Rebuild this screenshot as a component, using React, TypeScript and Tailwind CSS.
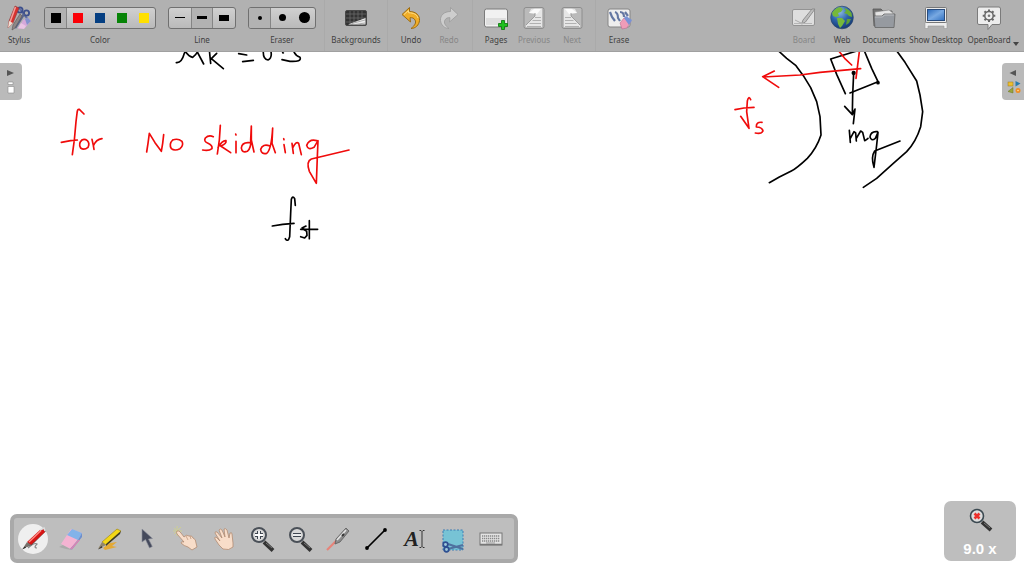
import React from "react";
import clsx from "clsx";

type IconProps = { className?: string };

/* ---------- Top toolbar icons (26 x 26) ---------- */

function StylusIcon() {
  return (
    <svg viewBox="0 0 26 26" className="size-[26px]">
      <path d="M13 3 23 16" stroke="#5f6fa5" strokeWidth="2" />
      <circle cx="14" cy="5" r="2.6" fill="none" stroke="#3c4f8c" strokeWidth="1.8" />
      <circle cx="20.500" cy="8" r="2.6" fill="none" stroke="#3c4f8c" strokeWidth="1.8" />
      <path d="M18 9 9 23" stroke="#59658c" strokeWidth="2.4" />
      <path d="M9 1 13 3 7 18 2 23 3 16Z" fill="#d8312f" stroke="#8d3a3a" strokeWidth=".6" />
      <path d="M9.500 2 4 17" stroke="#f3a09a" strokeWidth="1.500" />
      <path d="M3 16 7 18 2 23Z" fill="#f0ddd0" />
      <path d="M14 9 16 11 9 23 6 25 7 20Z" fill="#8e8787" stroke="#5d5656" strokeWidth=".6" />
      <path d="M17 15 22 13 25 16 19 23 12 24Z" fill="#d5a9da" />
      <path d="M19 14 22 13 25 16 21 20Z" fill="#8292cc" />
      <path d="M12 23 15 18 20 21 18 24Z" fill="#eac4e4" />
    </svg>
  );
}

function BackgroundsIcon() {
  return (
    <svg viewBox="0 0 26 26" className="size-[26px]">
      <rect x="2.500" y="5.500" width="21" height="15" rx="1.500" fill="#333" stroke="#4a4a4a" />
      <path d="M3 9h20M3 13h20M3 17h20M7 6v14M11 6v14M15 6v14M19 6v14" stroke="#6a6a6a" strokeWidth=".8" />
      <path d="M5 19.500 22.500 13v6.500Z" fill="#ececec" />
      <path d="M9 18.500 22 15M12 19.500 22 18" stroke="#999" strokeWidth=".8" />
    </svg>
  );
}

function UndoIcon({ className }: IconProps) {
  return (
    <svg viewBox="0 0 26 26" className={clsx("size-[26px]", className)}>
      <path
        d="M4 9.500 11.500 2.500 11.500 6.500C18 6.500 22 10.500 21.500 15.500 21 20 17.500 23.500 13 23.500 17 20.500 18.500 17.500 17 15 16 13 14 12.500 12 12.700L12.500 17Z"
        fill="currentColor"
        stroke="#9b6c15"
        strokeWidth="1"
        strokeLinejoin="round"
      />
      <path d="M6 9.500 10.500 5.500 10.700 7.800C15.500 7.800 19 9.500 20 13" fill="none" stroke="#ffe08a" strokeWidth="1" />
    </svg>
  );
}

function RedoIcon() {
  return (
    <svg viewBox="0 0 26 26" className="size-[26px]">
      <path
        d="M22 9.500 14.500 2.500 14.500 6.500C8 6.500 4 10.500 4.500 15.500 5 20 8.500 23.500 13 23.500 9 20.500 7.500 17.500 9 15 10 13 12 12.500 14 12.700L13.500 17Z"
        fill="#cdcdcd"
        stroke="#9b9b9b"
        strokeWidth=".8"
        strokeLinejoin="round"
      />
    </svg>
  );
}

function PagesIcon() {
  return (
    <svg viewBox="0 0 26 26" className="size-[26px]">
      <rect x="1.500" y="4" width="23" height="18" rx="2" fill="#f1f1f1" stroke="#7b7b7b" />
      <path d="M3 13h20v7H3z" fill="#dedede" />
      <path d="M18.500 15.500h3v3h3v3h-3v3h-3v-3h-3v-3h3z" fill="#1fc01f" stroke="#087508" strokeWidth=".8" />
    </svg>
  );
}

function PageTurnIcon({ className }: IconProps) {
  return (
    <svg viewBox="0 0 26 26" className={clsx("size-[26px]", className)}>
      <rect x="3" y="2.500" width="20" height="21" rx="2" fill="#bababa" stroke="#8e8e8e" />
      <path d="M10 4 14 3.500H21V22H5V20L14 11V8L8 8Z" fill="#e6e6e6" />
      <path d="M8 8 13 4 20 4 16 9Z" fill="#fafafa" />
      <path d="M14 12.500h6M11.500 15.500H20M8.500 18.500H20M6 21.500h14" stroke="#aaa" strokeWidth=".9" />
      <path d="M5 20 14 11V8" fill="none" stroke="#909090" strokeWidth=".8" />
    </svg>
  );
}

function EraseIcon() {
  return (
    <svg viewBox="0 0 26 26" className="size-[26px]">
      <rect x="2" y="4" width="22" height="18" rx="2" fill="#eee" stroke="#858585" />
      <path d="M4 7 6 12 9 16M9 7Q12 8 12 13L14 16M14 7Q18 7 18 12M19 7 22 11" fill="none" stroke="#6477a2" strokeWidth="2.200" />
      <path d="M14 18 18 13 25 16 21 23 16 24Z" fill="#ef9cb8" stroke="#b66f92" strokeWidth=".6" />
      <path d="M18 13 20 11 26 15 23 20Z" fill="#7792d6" />
    </svg>
  );
}

function BoardIcon() {
  return (
    <svg viewBox="0 0 26 26" className="size-[26px]">
      <rect x="1.500" y="4.500" width="22" height="16" rx="1.500" fill="#dedede" stroke="#939393" />
      <path d="M4 15Q8 17 12 19" fill="none" stroke="#aaa" />
      <path d="M24 4 21 4 12 15 10.500 19 14.500 17Z" fill="#bdbdbd" stroke="#808080" strokeWidth=".8" />
      <path d="M3 18.500H21" stroke="#b5b5b5" />
    </svg>
  );
}

function WebIcon() {
  return (
    <svg viewBox="0 0 26 26" className="size-[26px]">
      <defs>
        <radialGradient id="sea" cx=".4" cy=".25" r=".8">
          <stop offset="0" stopColor="#8ebbe8" />
          <stop offset=".5" stopColor="#2e65ab" />
          <stop offset="1" stopColor="#12346e" />
        </radialGradient>
      </defs>
      <circle cx="13" cy="12.500" r="11.300" fill="url(#sea)" stroke="#29466c" strokeWidth=".7" />
      <path d="M3 8Q6 3 11 2L14 4 12 7 9 8 10 11 7 12 4 11Z" fill="#76b83a" />
      <path d="M15 3Q20 4 22.500 8L23 12 20 11 18 9 15 8 17 6Z" fill="#69ad35" />
      <path d="M8 13 13 13 16 16 13 21 11 23 9 19Z" fill="#76b83a" />
      <path d="M18 14 22 14 20 18 17 20Z" fill="#5b9e36" />
    </svg>
  );
}

function DocumentsIcon() {
  return (
    <svg viewBox="0 0 26 26" className="size-[26px]">
      <path d="M2 4H10L12 6H21V21H3Z" fill="#747474" stroke="#555" strokeWidth=".8" />
      <path d="M4 7 18 5 22 8V21H5Z" fill="#e4e4e4" stroke="#888" strokeWidth=".6" />
      <path d="M3 11H11L13 9H24L23 22.500H4Z" fill="#969aa0" stroke="#656565" strokeWidth=".8" />
      <path d="M4 12H11.500L13.500 10H23" fill="none" stroke="#c4c6c9" strokeWidth=".8" />
    </svg>
  );
}

function DesktopIcon() {
  return (
    <svg viewBox="0 0 26 26" className="size-[26px]">
      <defs>
        <linearGradient id="screen" x2="1" y2="1">
          <stop offset="0" stopColor="#2868ba" />
          <stop offset=".5" stopColor="#78a9e2" />
          <stop offset="1" stopColor="#2f6fc0" />
        </linearGradient>
      </defs>
      <path d="M2 17.500H24V23.500H21V21H5V23.500H2Z" fill="#ededed" stroke="#999" strokeWidth=".6" />
      <rect x="2.500" y="2.500" width="21" height="15" rx="1" fill="#ebebeb" stroke="#777" />
      <rect x="4.500" y="4.500" width="17" height="11" fill="url(#screen)" stroke="#294c7d" />
    </svg>
  );
}

function OpenBoardIcon() {
  return (
    <svg viewBox="0 0 26 26" className="size-[26px]">
      <path d="M3 2H23Q24.500 2 24.500 4V18Q24.500 19.500 23 19.500H16L12 24.500V19.500H3Q1.500 19.500 1.500 18V4Q1.500 2 3 2Z" fill="#ededed" stroke="#7b7b7b" />
      <g stroke="#686868" strokeWidth="2">
        <path d="M13 4.500V17M6.700 10.700H19.300M8.500 6.300 17.500 15.200M17.500 6.300 8.500 15.200" />
      </g>
      <circle cx="13" cy="10.700" r="4.200" fill="#eee" stroke="#686868" strokeWidth="1.500" />
      <circle cx="13" cy="10.700" r="1.300" fill="#777" />
    </svg>
  );
}

/* ---------- Stylus palette icons (28 x 28) ---------- */

function PenIcon() {
  return (
    <svg viewBox="0 0 28 28" className="size-7">
      <path d="M9 23Q16 17 18 19 14 23 18 23" fill="none" stroke="#888" strokeWidth="1.200" />
      <path d="M24 4 27 6 13 20 8 22 9 18Z" fill="#555" />
      <path d="M21 5 25 4 26 7 12 20 8 17Z" fill="#d61515" />
      <path d="M22 5.500 10 17" stroke="#ff8b84" strokeWidth="1.400" />
      <path d="M8 17 12 20 3.500 24Z" fill="#77706a" />
      <path d="M3 24.500 6 21.500 7 22.800Z" fill="#222" />
      <path d="M21 5 25 3 26 6" fill="none" stroke="#ddd" strokeWidth="1.500" />
    </svg>
  );
}

function EraserIcon() {
  return (
    <svg viewBox="0 0 28 28" className="size-7">
      <path d="M2 22 9 24 15 25 6 20Z" fill="#aaa" />
      <path d="M14 4 25 8 14 24 4 19Z" fill="#f4b3d2" />
      <path d="M15 4 25 8 21 15 10 10Z" fill="#82b3e9" />
      <path d="M25 8V12L15 24.500 13 24 21 15Z" fill="#6c8fce" />
      <path d="M21 15 13 24 15 24.500 23 15Z" fill="#d885b4" />
    </svg>
  );
}

function MarkerIcon() {
  return (
    <svg viewBox="0 0 28 28" className="size-7">
      <path d="M8 23 15 18 22 17 17 21 22 22 10 25Z" fill="#e3a935" />
      <path d="M22 4 26 6 11 20 7 17Z" fill="#f3d716" stroke="#99800b" strokeWidth=".6" />
      <path d="M26 6 25 9 11 21V19Z" fill="#403c20" />
      <path d="M7 17 11 20 3 24Z" fill="#92866a" />
      <path d="M3 24.500 6.500 21 7.500 22.500Z" fill="#333" />
    </svg>
  );
}

function ArrowIcon() {
  return (
    <svg viewBox="0 0 28 28" className="size-7">
      <path d="M8 4V17L11.500 14.500 15.500 23 18.300 21.500 14.500 14 18.500 13.500Z" fill="#454a5c" stroke="#8c8f9b" strokeWidth=".6" />
    </svg>
  );
}

function PointerHandIcon() {
  return (
    <svg viewBox="0 0 28 28" className="size-7">
      <path d="M5 1V11M1 6H10M2 3 9 10M9 2 2 9" stroke="#cdcf93" strokeWidth="1" />
      <path
        d="M5 6Q7 5 9 8L12 12Q14 9 17 11 20 10 21 13 24 14 24 18L25 22 20 25 16 22Q12 21 9 18 9 16 12 17L5 9Q4 7 5 6Z"
        fill="#f8ddc9"
        stroke="#b18b72"
        strokeWidth=".8"
      />
      <path d="M14 11 16 15M18 11 19 14" stroke="#bf987d" strokeWidth=".8" />
    </svg>
  );
}

function HandIcon() {
  return (
    <svg viewBox="0 0 28 28" className="size-7">
      <path
        d="M9 20 5 14Q4 12 6 12L10 16 5 8Q5 6 7 7L12 13 9 5Q10 3 12 5L15 12 14 4Q16 3 17 5L19 13 20 8Q22 7 22 9L23 18 23 22Q19 26 13 24Z"
        fill="#f8ddc9"
        stroke="#b18b72"
        strokeWidth=".8"
        strokeLinejoin="round"
      />
    </svg>
  );
}

function LensIcon({ sign }: { sign: string }) {
  return (
    <svg viewBox="0 0 28 28" className="size-7">
      <path d="M16 17 25 25.500" stroke="#333" strokeWidth="4" />
      <path d="M18 18 24 23" stroke="#777" strokeWidth="1" />
      <circle cx="11" cy="10" r="7" fill="#d8d8d8" stroke="#4a5058" strokeWidth="2" />
      <path d={sign} stroke="#3f4650" strokeWidth="4" />
      <path d={sign} stroke="#fff" strokeWidth="1.800" />
    </svg>
  );
}

function LaserIcon() {
  return (
    <svg viewBox="0 0 28 28" className="size-7">
      <path d="M3 25 13 15" stroke="#e78379" strokeWidth="2.200" />
      <path d="M22 3 25 6 16 17 11 19 12 14Z" fill="#8d8d8d" stroke="#5c5c5c" strokeWidth=".8" />
      <path d="M22 5 13 15" stroke="#e4e4e4" strokeWidth="1.600" />
      <path d="M18 11 20 9" stroke="#333" strokeWidth="2" />
    </svg>
  );
}

function LineIcon() {
  return (
    <svg viewBox="0 0 28 28" className="size-7">
      <path d="M5 23 23 5" stroke="#000" strokeWidth="1.700" />
      <circle cx="5" cy="23" r="1.900" />
      <circle cx="23" cy="5" r="1.900" />
    </svg>
  );
}

function CaptureIcon() {
  return (
    <svg viewBox="0 0 28 28" className="size-7">
      <rect x="4" y="5" width="20" height="20" fill="#77c3d5" stroke="#3e7db3" strokeDasharray="2 1.500" />
      <path d="M9 19 24 24M9 24 24 20" stroke="#4f719f" strokeWidth="2" />
      <circle cx="6.500" cy="19.500" r="2.300" fill="#9ecbdc" stroke="#2e4f91" strokeWidth="1.700" />
      <circle cx="7.500" cy="24.500" r="2.300" fill="#9ecbdc" stroke="#2e4f91" strokeWidth="1.700" />
    </svg>
  );
}

function KeyboardIcon() {
  return (
    <svg viewBox="0 0 28 28" className="size-7">
      <rect x="3" y="8" width="22" height="12" fill="#e3e3e3" stroke="#777" />
      <path d="M5 11H23M5 13.500H23M5 16H23" stroke="#888" strokeWidth="1.300" strokeDasharray="1.300 .7" />
      <path d="M3 19.500H25" stroke="#777" strokeWidth="1.500" />
      <path d="M9 18H18" stroke="#999" />
    </svg>
  );
}

/* ---------- Top toolbar ---------- */

type ToolProps = {
  label: string;
  icon: React.ReactNode;
  width?: string;
  disabled?: boolean;
};

function Tool({ label, icon, width = "w-[38px]", disabled }: ToolProps) {
  return (
    <button
      type="button"
      disabled={disabled}
      className={clsx(
        "flex shrink-0 flex-col items-center whitespace-nowrap",
        width,
        disabled ? "text-[#868686]" : "text-[#3f3f3f]"
      )}
    >
      <span className="flex h-[35px] items-center">{icon}</span>
      <span className="leading-[10px]">{label}</span>
    </button>
  );
}

type Option = { name: string; mark: string };

const colors: Option[] = [
  { name: "Black", mark: "size-[10px] bg-black" },
  { name: "Red", mark: "size-[10px] bg-[#fb0007]" },
  { name: "Blue", mark: "size-[10px] bg-[#053f82]" },
  { name: "Green", mark: "size-[10px] bg-[#078407]" },
  { name: "Yellow", mark: "size-[10px] bg-[#ffe000]" },
];

const lines: Option[] = [
  { name: "Thin", mark: "w-[10px] h-px bg-black" },
  { name: "Medium", mark: "w-[10px] h-[3px] bg-black" },
  { name: "Thick", mark: "w-[10px] h-[6px] bg-black" },
];

const erasers: Option[] = [
  { name: "Small", mark: "size-1 rounded-full bg-black" },
  { name: "Normal", mark: "size-[7px] rounded-full bg-black" },
  { name: "Large", mark: "size-[11px] rounded-full bg-black" },
];

function OptionGroup({ label, options, selected }: { label: string; options: Option[]; selected: number }) {
  return (
    <div role="group" aria-label={label} className="flex shrink-0 flex-col items-center text-[#3f3f3f]">
      <div className="flex h-[35px] items-center">
        <div className="flex h-[22px] overflow-hidden rounded-[3px] border border-[#707070] bg-linear-to-b from-[#d0d0d0] to-[#bababa]">
          {options.map((option, index) => (
            <button
              key={option.name}
              type="button"
              aria-label={option.name}
              aria-pressed={index === selected}
              className={clsx(
                "flex w-[22px] items-center justify-center",
                index === selected && "border-r border-[#858585] bg-[#b2b2b2]",
                index === selected && index > 0 && "border-l"
              )}
            >
              <span className={option.mark}></span>
            </button>
          ))}
        </div>
      </div>
      <span className="leading-[10px]">{label}</span>
    </div>
  );
}

function Divider() {
  return <div className="mx-1 w-px shrink-0 bg-[#aaaaaa]"></div>;
}

function Toolbar() {
  return (
    <header className="flex h-[52px] items-stretch justify-between border-b border-[#a0a0a0] bg-[#b1b1b1] font-['Noto_Sans',sans-serif] text-[8px]">
      <div className="flex">
        <Tool label="Stylus" icon={<StylusIcon />} />
        <div className="flex gap-3 pr-1 pl-[6px]">
          <OptionGroup label="Color" options={colors} selected={0} />
          <OptionGroup label="Line" options={lines} selected={1} />
          <OptionGroup label="Eraser" options={erasers} selected={0} />
        </div>
        <Divider />
        <Tool label="Backgrounds" icon={<BackgroundsIcon />} width="w-[54px]" />
        <Divider />
        <Tool label="Undo" icon={<UndoIcon className="text-[#f0ad27]" />} />
        <Tool label="Redo" icon={<RedoIcon />} disabled />
        <Divider />
        <Tool label="Pages" icon={<PagesIcon />} />
        <Tool label="Previous" icon={<PageTurnIcon />} disabled />
        <Tool label="Next" icon={<PageTurnIcon className="-scale-x-100" />} disabled />
        <Divider />
        <Tool label="Erase" icon={<EraseIcon />} />
      </div>
      <div className="flex">
        <Tool label="Board" icon={<BoardIcon />} disabled />
        <Tool label="Web" icon={<WebIcon />} />
        <Tool label="Documents" icon={<DocumentsIcon />} width="w-[46px]" />
        <Tool label="Show Desktop" icon={<DesktopIcon />} width="w-[58px]" />
        <Tool label="OpenBoard" icon={<OpenBoardIcon />} width="w-[48px]" />
        <button type="button" aria-label="More" className="flex w-[11px] items-end pb-[5px]">
          <svg viewBox="0 0 6 4" className="h-1 w-[6px]">
            <path d="M0 0H6L3 4Z" fill="#444" />
          </svg>
        </button>
      </div>
    </header>
  );
}

/* ---------- Board ---------- */

function Ink() {
  return (
    <svg
      viewBox="0 156 3072 1572"
      className="block w-full"
      fill="none"
      stroke="#000"
      strokeWidth="5"
      strokeLinecap="round"
      strokeLinejoin="round"
    >
      {/* friction coefficient */}
      <path d="M529 188Q545 190 553 160L556 154Q566 170 578 172 588 165 592 156L611 192M628 150 632 190M650 160 634 176 670 206" />
      <path d="M716 161 740 165M728 185 760 181M790 150Q788 178 804 180 818 174 812 150M848 158 850 159M880 150Q884 166 900 172 906 186 870 184L846 179" />

      {/* no skidding condition */}
      <g transform="translate(120 270)" stroke="#f00b0b">
        <path d="M132 72 118 58Q112 56 111 70L108 95 103 150 97 194M64 157 92 152 112 150" />
        <path d="M126 150Q114 160 122 174 132 182 144 172 150 160 142 152 134 146 126 150M156 148 160 166 162 178M160 168Q168 148 186 146" />
        <path d="M320 186 324 160 328 130 345 158 364 184 368 160 371 134M398 150Q386 162 394 176 404 184 420 176 432 166 426 154 414 144 398 150" />
        <path d="M520 140Q506 134 496 144 490 154 504 160 518 166 516 176 506 184 488 180M541 106 538 150 532 192M534 172Q548 150 558 152 560 162 542 168L572 188" />
        <path d="M588 154V188M587 132 588 135M628 158Q606 156 604 174 606 190 622 184 634 174 632 150L634 108V150L642 186" />
        <path d="M690 168Q668 160 662 178 664 194 680 190 694 180 698 114L696 160 706 188M732 164 736 188M731 146 732 149M756 160 760 190M758 174Q768 152 776 160L784 194" />
        <path d="M830 152Q808 146 800 166 804 182 822 172L834 152 832 200 829 280 808 244Q798 214 814 207L927 180" />
      </g>
      <g transform="translate(120 270)">
        <path d="M766 346 764 326Q758 316 754 328L752 370 749 440Q744 458 736 446M697 408 728 403 762 400" />
        <path d="M798 408 786 414 800 424 801 436 794 444 782 440" />
        <path d="M808 392V446M782 418H833" />
      </g>

      {/* free body diagram on the curved road */}
      <g transform="translate(2160 135)">
        <path d="M178 20 200 40 228 62 250 92 272 128 290 170 300 215 303 270Q290 310 262 340 230 370 214 378L178 396 148 413" />
        <path d="M532 20 555 52 590 108 600 150 608 200 602 245Q588 290 560 320L520 355 470 400 430 427" />
        <path d="M410 18 332 42 350 88 376 146M390 144 435 126 474 110 455 70 434 20" />
        <path d="M401 84 398 150 397 208M374 184 397 209 405 192 400 236" />
        <path d="M388 256 391 292M391 280 402 260 407 264 409 288M409 280 422 258 428 262 434 287Q440 284 444 280" />
        <path d="M472 260Q452 258 450 276 454 290 466 280L474 262 470 300 462 367Q452 336 464 318L540 288" />
        <circle cx="401" cy="84" r="4" fill="#000" />
        <circle cx="474" cy="113" r="3" fill="#000" />
        <g stroke="#f00b0b">
          <path d="M422 71 300 82 240 90 130 96M163 78 128 95 176 127" />
          <path d="M358 20 374 40 395 60M418 20 408 100" />
          <path d="M92 164Q86 150 82 168L80 200 87 250 62 214M45 194 72 189 102 187M126 232Q108 230 109 246 126 246 129 258 124 268 106 264" />
        </g>
      </g>
    </svg>
  );
}

function PagesTab() {
  return (
    <button
      type="button"
      aria-label="Show pages"
      className="absolute top-[11px] left-0 flex h-[37px] w-[22px] items-center justify-center rounded-r bg-[#bababa]"
    >
      <svg viewBox="0 0 12 26" className="h-[26px] w-3">
        <path d="M2 1V7L9 4Z" fill="#555" />
        <path d="M3 13H8V15.500H3ZM3 17.500H9V24H3Z" fill="#fff" stroke="#8a8a8a" strokeWidth=".6" />
      </svg>
    </button>
  );
}

function LibraryTab() {
  return (
    <button
      type="button"
      aria-label="Show library"
      className="absolute top-[11px] right-0 flex h-[37px] w-[22px] items-center justify-center rounded-l bg-[#bababa]"
    >
      <svg viewBox="0 0 16 26" className="h-[26px] w-4">
        <path d="M11 1V7L4.500 4Z" fill="#555" />
        <rect x="3" y="13" width="5" height="4" fill="#edbe2e" stroke="#9a7b1f" strokeWidth=".5" />
        <path d="M10.500 12V17.500L15.500 14.500Z" fill="#287cae" />
        <path d="M8 18.500V24L3 22.500Z" fill="#9aa43b" stroke="#697522" strokeWidth=".5" />
        <circle cx="13" cy="21.500" r="2.500" fill="#ef8f27" />
        <circle cx="13" cy="21.500" r=".8" fill="#ffe1a0" />
      </svg>
    </button>
  );
}

const paletteTools = [
  { name: "Pen", icon: <PenIcon /> },
  { name: "Eraser", icon: <EraserIcon /> },
  { name: "Marker", icon: <MarkerIcon /> },
  { name: "Select", icon: <ArrowIcon /> },
  { name: "Interact", icon: <PointerHandIcon /> },
  { name: "Scroll page", icon: <HandIcon /> },
  { name: "Zoom in", icon: <LensIcon sign="M7 10H15M11 6V14" /> },
  { name: "Zoom out", icon: <LensIcon sign="M7 10H15" /> },
  { name: "Laser pointer", icon: <LaserIcon /> },
  { name: "Draw line", icon: <LineIcon /> },
  {
    name: "Write text",
    icon: (
      <span className="flex items-center font-['Liberation_Serif',serif] text-[22px] leading-7 text-[#222]">
        <b className="italic">A</b>
        <svg viewBox="0 0 6 18" className="h-[18px] w-[6px]" fill="none" stroke="#333">
          <path d="M.5 .5H2L3 1.500 4 .5H5.500M3 1.500V16.500M.5 17.500H2L3 16.500 4 17.500H5.500" />
        </svg>
      </span>
    ),
  },
  { name: "Capture", icon: <CaptureIcon /> },
  { name: "Virtual keyboard", icon: <KeyboardIcon /> },
];

function StylusPalette() {
  return (
    <div className="absolute bottom-[13px] left-[10px] flex h-[49px] w-[508px] items-center rounded-[7px] border-4 border-[#a9a9a9] bg-[#bebebe] pr-1">
      {paletteTools.map((tool, index) => (
        <button key={tool.name} type="button" aria-label={tool.name} className="flex flex-1 justify-center">
          <span
            className={clsx(
              "flex size-[30px] items-center justify-center rounded-full",
              index === 0 && "bg-[#efefef]"
            )}
          >
            {tool.icon}
          </span>
        </button>
      ))}
    </div>
  );
}

function ZoomBadge() {
  return (
    <button
      type="button"
      className="absolute right-2 bottom-[15px] flex h-[60px] w-[72px] flex-col items-center rounded-[7px] bg-[#bebebe] pt-1"
    >
      <svg viewBox="0 0 28 28" className="size-7">
        <path d="M16 17 25 25" stroke="#333" strokeWidth="4" />
        <path d="M18 18 24 23" stroke="#777" />
        <circle cx="11" cy="11" r="6.500" fill="#ddd" stroke="#3b4951" strokeWidth="1.600" />
        <path d="M8.500 8.500 13.500 13.500M13.500 8.500 8.500 13.500" stroke="#ed2f2b" strokeWidth="2.600" />
      </svg>
      <span className="mt-1 font-['Liberation_Sans',sans-serif] text-[15px] leading-6 font-bold text-white">9.0 x</span>
    </button>
  );
}

export default function App() {
  return (
    <div className="flex h-screen flex-col bg-white">
      <Toolbar />
      <main className="relative min-h-0 flex-1 overflow-hidden">
        <Ink />
        <PagesTab />
        <LibraryTab />
        <StylusPalette />
        <ZoomBadge />
      </main>
    </div>
  );
}
